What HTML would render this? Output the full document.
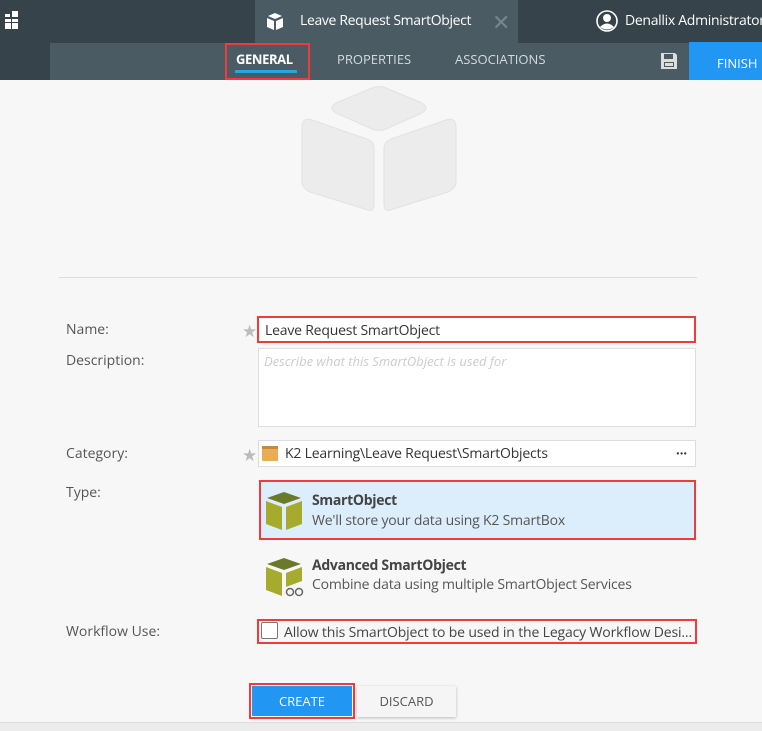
<!DOCTYPE html>
<html><head><style>
*{margin:0;padding:0;box-sizing:border-box}
body{width:762px;height:731px;overflow:hidden;background:#f7f7f7;font-family:"Open Sans","Liberation Sans",sans-serif;position:relative;color:#444}
.a{position:absolute}
.lbl{font-size:14px;color:#555}
.red{border:2px solid #ee3b3b}
.star{color:#bbb;font-size:17px}
</style></head><body>
<div class="a" style="left:0;top:0;width:762px;height:80px;background:#36434b"></div>
<div class="a" style="left:255px;top:0;width:263px;height:43px;background:#4a5b64"></div>
<div class="a" style="left:50px;top:43px;width:640px;height:37px;background:#4a5b64"></div>
<div class="a" style="left:5px;top:14px;width:5px;height:3px;background:#fff"></div>
<div class="a" style="left:12px;top:11px;width:6px;height:6px;background:#fff"></div>
<div class="a" style="left:5px;top:19px;width:6px;height:10px;background:#fff"></div>
<div class="a" style="left:12px;top:19px;width:6px;height:10px;background:#fff"></div>
<div class="a" style="left:5px;top:22px;width:13px;height:1px;background:#36434b"></div>
<svg class="a" style="left:265px;top:11px" width="20" height="20" viewBox="0 0 20 20"><path d="M3 5 L10 2 L17 5 L10 8Z" fill="#fff"/><path d="M2 7 L9 10 V19 L2 16Z" fill="#fff"/><path d="M18 7 L11 10 V19 L18 16Z" fill="#fff"/></svg>
<div class="a" style="left:300px;top:11px;color:#fff;font-size:14px;letter-spacing:-0.35px">Leave Request SmartObject</div>
<div class="a" style="left:492px;top:7px;color:#76858d;font-size:22px">✕</div>
<svg class="a" style="left:596px;top:10px" width="22" height="22" viewBox="0 0 22 22"><circle cx="11" cy="11" r="10" fill="none" stroke="#fff" stroke-width="1.6"/><circle cx="11" cy="8" r="4" fill="#fff"/><path d="M4 17 Q11 10 18 17 Q11 22 4 17Z" fill="#fff"/></svg>
<div class="a" style="left:625px;top:11px;color:#fff;font-size:14px;letter-spacing:-0.3px;white-space:nowrap">Denallix Administrator</div>
<div class="a red" style="left:225px;top:43px;width:85px;height:37px"></div>
<div class="a" style="left:236px;top:50px;color:#fff;font-size:13px;font-weight:bold;letter-spacing:-0.4px">GENERAL</div>
<div class="a" style="left:235px;top:70px;width:62px;height:3px;background:#25a8e0"></div>
<div class="a" style="left:337px;top:50px;color:#d5dbde;font-size:13px">PROPERTIES</div>
<div class="a" style="left:455px;top:50px;color:#d5dbde;font-size:13px">ASSOCIATIONS</div>
<svg class="a" style="left:660px;top:52px" width="18" height="18" viewBox="0 0 18 18"><path d="M1 1H15L17 3V17H1Z" fill="#ddd"/><rect x="4" y="2" width="9" height="5" fill="#4a5b64"/><rect x="4" y="10" width="10" height="5" fill="#4a5b64"/><rect x="5" y="11" width="8" height="3" fill="#ddd"/></svg>
<div class="a" style="left:689px;top:42px;width:73px;height:38px;background:#2196f3;color:#fff;font-size:13px;padding:12px 0 0 28px">FINISH</div>
<svg class="a" style="left:300px;top:84px" width="158" height="128" viewBox="0 0 158 128">
<g fill="#ececec" stroke="#e2e2e2" stroke-width="1">
<path d="M36 19 Q28 24 36 29 L72 45 Q79 48 86 45 L122 29 Q130 24 122 19 L86 4 Q79 1 72 4Z"/>
<path d="M12 36 Q2 33 2 43 V98 Q2 104 10 108 L68 126 Q74 128 74 120 V64 Q74 58 67 55Z"/>
<path d="M146 36 Q156 33 156 43 V98 Q156 104 148 108 L90 126 Q84 128 84 120 V64 Q84 58 91 55Z"/>
</g></svg>
<div class="a" style="left:59px;top:277px;width:638px;height:1px;background:#ddd"></div>
<div class="a lbl" style="left:66px;top:320px">Name:</div>
<div class="a star" style="left:242px;top:319px">★</div>
<div class="a red" style="left:257px;top:316px;width:439px;height:27px;background:#fff;font-size:14px;padding:3px 6px;color:#333;letter-spacing:-0.2px">Leave Request SmartObject</div>
<div class="a lbl" style="left:66px;top:351px">Description:</div>
<div class="a" style="left:258px;top:348px;width:438px;height:79px;background:#fff;border:1px solid #ddd;font-size:13px;font-style:italic;color:#ccc;padding:3px 5px">Describe what this SmartObject is used for</div>
<div class="a lbl" style="left:66px;top:444px">Category:</div>
<div class="a star" style="left:242px;top:443px">★</div>
<div class="a" style="left:258px;top:440px;width:438px;height:27px;background:#fff;border:1px solid #ddd;font-size:14px;padding:3px 0 0 26px;color:#333;letter-spacing:-0.2px">K2 Learning\Leave Request\SmartObjects</div>
<div class="a" style="left:262px;top:446px;width:16px;height:15px;background:#e9ad55;border-top:3px solid #c9893a"></div>
<div class="a" style="left:676px;top:444px;font-size:13px;font-weight:bold;color:#333">···</div>
<div class="a lbl" style="left:66px;top:483px">Type:</div>
<div class="a red" style="left:259px;top:480px;width:437px;height:60px;background:#dcedfb"></div>
<svg class="a" style="left:265px;top:491px" width="38" height="40" viewBox="0 0 38 40"><path d="M2 7 L19 1 L36 7 L19 13Z" fill="#6b7a2a"/><path d="M1 10 L17 16 V39 L1 33Z" fill="#a6ab2e"/><path d="M37 10 L21 16 V39 L37 33Z" fill="#a6ab2e"/></svg>
<div class="a" style="left:312px;top:491px;font-size:14px;font-weight:bold;color:#444;letter-spacing:-0.3px">SmartObject</div>
<div class="a" style="left:312px;top:511px;font-size:14px;color:#555;letter-spacing:-0.2px">We'll store your data using K2 SmartBox</div>
<svg class="a" style="left:265px;top:557px" width="40" height="40" viewBox="0 0 40 40"><path d="M2 7 L19 1 L36 7 L19 13Z" fill="#6b7a2a"/><path d="M1 10 L17 16 V39 L1 33Z" fill="#a6ab2e"/><path d="M37 10 L21 16 V30 L37 24Z" fill="#a6ab2e"/><circle cx="25" cy="35" r="3.5" fill="none" stroke="#666" stroke-width="1.5"/><circle cx="34" cy="35" r="3.5" fill="none" stroke="#666" stroke-width="1.5"/></svg>
<div class="a" style="left:312px;top:556px;font-size:14px;font-weight:bold;color:#444;letter-spacing:-0.3px">Advanced SmartObject</div>
<div class="a" style="left:312px;top:575px;font-size:14px;color:#555;letter-spacing:-0.2px">Combine data using multiple SmartObject Services</div>
<div class="a lbl" style="left:66px;top:622px">Workflow Use:</div>
<div class="a red" style="left:257px;top:619px;width:440px;height:25px"></div>
<div class="a" style="left:261px;top:622px;width:17px;height:17px;border:1px solid #777;border-radius:2px;background:#fff"></div>
<div class="a" style="left:284px;top:623px;font-size:14px;color:#444;white-space:nowrap;letter-spacing:-0.15px">Allow this SmartObject to be used in the Legacy Workflow Desi...</div>
<div class="a red" style="left:249px;top:683px;width:106px;height:36px"></div>
<div class="a" style="left:252px;top:686px;width:100px;height:30px;background:#2196f3;color:#fff;font-size:13px;text-align:center;line-height:30px">CREATE</div>
<div class="a" style="left:357px;top:686px;width:99px;height:31px;background:#f5f5f5;box-shadow:0 1px 3px rgba(0,0,0,.25);color:#555;font-size:13px;text-align:center;line-height:31px">DISCARD</div>
<div class="a" style="left:0;top:722px;width:762px;height:9px;background:#ececec;border-top:1px solid #ddd"></div>
</body></html>
